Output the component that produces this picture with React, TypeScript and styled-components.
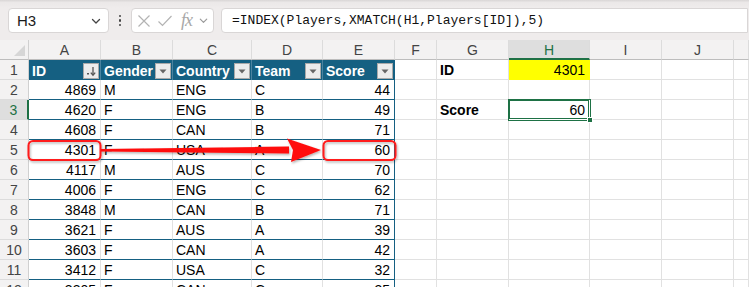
import React from "react";
import styled, { createGlobalStyle, css } from "styled-components";

const GlobalStyle = createGlobalStyle`
  html, body { margin: 0; padding: 0; }
  body {
    width: 749px; height: 287px; overflow: hidden;
    background: #ffffff;
    font-family: "Liberation Sans", Arial, sans-serif;
  }
  * { box-sizing: border-box; }
`;

const ACCENT = "#156082";
const GRID = "#e1e1e1";
const GREEN = "#1e7145";

const Page = styled.div`
  width: 749px;
  height: 287px;
  overflow: hidden;
  display: flex;
  flex-direction: column;
`;

const TopStrip = styled.div`
  height: 8px;
  flex: none;
  background: linear-gradient(#d9d6d6, #ebe8e8 30%, #efecec);
`;

const FormulaBar = styled.div`
  height: 32px;
  flex: none;
  background: #efecec;
  display: flex;
  align-items: flex-start;
  padding: 0 0 0 8px;
`;

const Box = styled.div`
  height: 25px;
  background: #ffffff;
  border: 1px solid #d9d6d6;
  border-radius: 4px;
  display: flex;
  align-items: center;
`;

const NameBox = styled(Box)`
  width: 101px;
  padding: 0 6px 0 8px;
  justify-content: space-between;
  font-size: 15px;
  color: #1a1a1a;
`;

const Dots = styled.div`
  width: 22px;
  height: 25px;
  display: flex;
  flex-direction: column;
  align-items: center;
  justify-content: center;
  gap: 2px;
  & > span {
    width: 2.5px;
    height: 2.5px;
    border-radius: 50%;
    background: #444;
  }
`;

const FxBox = styled(Box)`
  width: 83px;
  padding: 0 4px 0 5px;
  gap: 6px;
  margin-right: 7px;
`;

const Fx = styled.span`
  font-family: "Liberation Serif", "Times New Roman", serif;
  font-style: italic;
  font-size: 18px;
  color: #a8a8a8;
  margin-left: 2px;
  letter-spacing: -1px;
`;

const FormulaInput = styled(Box)`
  flex: 1;
  margin-right: 1px;
  border-radius: 4px 0 0 4px;
  padding-left: 10px;
  font-family: "Liberation Mono", "DejaVu Sans Mono", monospace;
  font-size: 13px;
  color: #111;
`;

const Sheet = styled.div`
  position: relative;
  flex: none;
  display: grid;
  grid-template-columns: 29px 72px 72px 79px 71px 72px 42px 72px 81px 72px 72px 1fr;
  grid-auto-rows: 20px;
`;

const HeadBase = css`
  background: #f3f2f2;
  color: #444;
  font-size: 14px;
  display: flex;
  align-items: center;
  justify-content: center;
`;

const Corner = styled.div`
  ${HeadBase};
  position: relative;
  border-right: 1px solid #d0d0d0;
  border-bottom: 1px solid #bdbdbd;
  &::after {
    content: "";
    position: absolute;
    right: 3px;
    bottom: 3px;
    border-style: solid;
    border-width: 0 0 11px 11px;
    border-color: transparent transparent #d6d6d6 transparent;
  }
`;

const ColHeader = styled.div<{ $active?: boolean }>`
  ${HeadBase};
  border-right: 1px solid #dcdcdc;
  border-bottom: 1px solid #bdbdbd;
  padding-top: 1px;
  ${(p) =>
    p.$active &&
    css`
      background: #dedede;
      color: ${GREEN};
      border-bottom: 2px solid ${GREEN};
    `}
`;

const RowHeader = styled.div<{ $active?: boolean }>`
  ${HeadBase};
  border-right: 1px solid #d0d0d0;
  border-bottom: 1px solid #dcdcdc;
  ${(p) =>
    p.$active &&
    css`
      background: #dedede;
      color: ${GREEN};
      border-right: 2px solid ${GREEN};
    `}
`;

type Align = "left" | "right";

const Cell = styled.div<{
  $align?: Align;
  $bold?: boolean;
  $fill?: string;
  $table?: boolean;
  $edge?: boolean;
  $selected?: boolean;
}>`
  position: relative;
  font-size: 14px;
  color: #000;
  white-space: nowrap;
  overflow: visible;
  display: flex;
  align-items: center;
  padding: 1px 4px 0 3px;
  justify-content: ${(p) => (p.$align === "right" ? "flex-end" : "flex-start")};
  font-weight: ${(p) => (p.$bold ? 700 : 400)};
  background: ${(p) => p.$fill || "#ffffff"};
  border-right: 1px solid ${(p) => (p.$edge ? ACCENT : p.$fill || GRID)};
  border-bottom: 1px solid ${(p) => (p.$table ? ACCENT : p.$fill || GRID)};
  ${(p) =>
    p.$selected &&
    css`
      z-index: 2;
      border-color: transparent;
      box-shadow: inset 0 0 0 1px ${GREEN}, 0 0 0 1px ${GREEN};
    `}
`;

const FillHandle = styled.span`
  position: absolute;
  right: -4px;
  bottom: -4px;
  width: 6px;
  height: 6px;
  background: ${GREEN};
  border: 1px solid #fff;
`;

const TableHead = styled.div<{ $edge?: boolean }>`
  background: ${ACCENT};
  color: #ffffff;
  font-weight: 700;
  font-size: 14px;
  display: flex;
  align-items: center;
  justify-content: space-between;
  padding: 1px 1px 0 3px;
  border-right: 1px solid ${(p) => (p.$edge ? ACCENT : "#4b83a0")};
`;

const FilterButton = styled.span`
  width: 16px;
  height: 16px;
  background: #ececec;
  border: 1px solid #a9a9a9;
  display: flex;
  align-items: center;
  justify-content: center;
  flex: none;
`;

const Overlay = styled.svg`
  position: absolute;
  left: 0;
  top: 0;
  pointer-events: none;
  z-index: 3;
`;

const Chevron = ({ color = "#444", size = 12 }: { color?: string; size?: number }) => (
  <svg width={size} height={size} viewBox="0 0 12 12">
    <path d="M2.5 4.5 L6 8 L9.5 4.5" fill="none" stroke={color} strokeWidth="1.3" strokeLinecap="round" strokeLinejoin="round" />
  </svg>
);

const FilterIcon = ({ sorted }: { sorted?: boolean }) => (
  <FilterButton>
    {sorted ? (
      <svg width="14" height="14" viewBox="0 0 14 14">
        <rect x="3" y="9" width="2" height="1.5" fill="#555" />
        <path d="M9 3 V11" stroke="#555" strokeWidth="1.3" />
        <path d="M6.8 8.6 L9 11.2 L11.2 8.6" fill="none" stroke="#555" strokeWidth="1.3" />
      </svg>
    ) : (
      <svg width="14" height="14" viewBox="0 0 14 14">
        <path d="M3.5 5.5 H10.5 L7 9.5 Z" fill="#666" />
      </svg>
    )}
  </FilterButton>
);

type Row = [string, string, string, string, string];
const rows: Row[] = [
  ["4869", "M", "ENG", "C", "44"],
  ["4620", "F", "ENG", "B", "49"],
  ["4608", "F", "CAN", "B", "71"],
  ["4301", "F", "USA", "A", "60"],
  ["4117", "M", "AUS", "C", "70"],
  ["4006", "F", "ENG", "C", "62"],
  ["3848", "M", "CAN", "B", "71"],
  ["3621", "F", "AUS", "A", "39"],
  ["3603", "F", "CAN", "A", "42"],
  ["3412", "F", "USA", "C", "32"],
  ["3305", "F", "CAN", "C", "35"],
];

const columns = ["A", "B", "C", "D", "E", "F", "G", "H", "I", "J", ""];
const headers = ["ID", "Gender", "Country", "Team", "Score"];

const side: Record<number, { g?: string; h?: React.ReactNode; fill?: string; selected?: boolean }> = {
  1: { g: "ID", h: "4301", fill: "#ffff00" },
  3: { g: "Score", h: "60", selected: true },
};

export default function App() {
  return (
    <>
      <GlobalStyle />
      <Page>
        <TopStrip />
        <FormulaBar>
          <NameBox>
            <span>H3</span>
            <Chevron />
          </NameBox>
          <Dots>
            <span />
            <span />
            <span />
          </Dots>
          <FxBox>
            <svg width="14" height="14" viewBox="0 0 14 14">
              <path d="M1.5 1.5 L12.5 12.5 M12.5 1.5 L1.5 12.5" stroke="#b3b3b3" strokeWidth="1.2" />
            </svg>
            <svg width="16" height="14" viewBox="0 0 16 14">
              <path d="M1.5 7.5 L5.5 11.5 L14.5 2" fill="none" stroke="#b3b3b3" strokeWidth="1.2" />
            </svg>
            <Fx>fx</Fx>
            <Chevron color="#9a9a9a" size={11} />
          </FxBox>
          <FormulaInput>=INDEX(Players,XMATCH(H1,Players[ID]),5)</FormulaInput>
        </FormulaBar>
        <Sheet>
          <Corner />
          {columns.map((c, i) => (
            <ColHeader key={i} $active={c === "H"}>
              {c}
            </ColHeader>
          ))}

          <RowHeader>1</RowHeader>
          {headers.map((h, i) => (
            <TableHead key={h} $edge={i === 4}>
              <span>{h}</span>
              <FilterIcon sorted={i === 0} />
            </TableHead>
          ))}
          <Cell />
          <Cell $bold>{side[1].g}</Cell>
          <Cell $align="right" $fill={side[1].fill}>
            {side[1].h}
          </Cell>
          <Cell />
          <Cell />
          <Cell />

          {rows.map((r, idx) => {
            const n = idx + 2;
            const s = side[n];
            return (
              <React.Fragment key={n}>
                <RowHeader $active={n === 3}>{n}</RowHeader>
                <Cell $align="right" $table>
                  {r[0]}
                </Cell>
                <Cell $table>{r[1]}</Cell>
                <Cell $table>{r[2]}</Cell>
                <Cell $table>{r[3]}</Cell>
                <Cell $align="right" $table $edge>
                  {r[4]}
                </Cell>
                <Cell />
                <Cell $bold>{s?.g}</Cell>
                <Cell $align="right" $fill={s?.fill} $selected={s?.selected}>
                  {s?.h}
                  {s?.selected && <FillHandle />}
                </Cell>
                <Cell />
                <Cell />
                <Cell />
              </React.Fragment>
            );
          })}

          <Overlay width="749" height="247" viewBox="0 0 749 247">
            <defs>
              <filter id="sh" x="-10%" y="-50%" width="120%" height="200%">
                <feDropShadow dx="1" dy="1.5" stdDeviation="1.2" floodColor="#000" floodOpacity="0.3" />
              </filter>
            </defs>
            <rect x="28.5" y="101" width="72" height="19" rx="4.5" fill="none" stroke="#ff1a1a" strokeWidth="2" filter="url(#sh)" />
            <rect x="323.5" y="101" width="72" height="19" rx="4.5" fill="none" stroke="#ff1a1a" strokeWidth="2" filter="url(#sh)" />
            <g filter="url(#sh)">
              <path d="M101 109 L289 106.5 L289 113.5 L101 111.5 Z" fill="#ff0d0d" />
              <path d="M287 98.5 L321 110 L291 122 L293 110 Z" fill="#ff0d0d" />
            </g>
          </Overlay>
        </Sheet>
      </Page>
    </>
  );
}
